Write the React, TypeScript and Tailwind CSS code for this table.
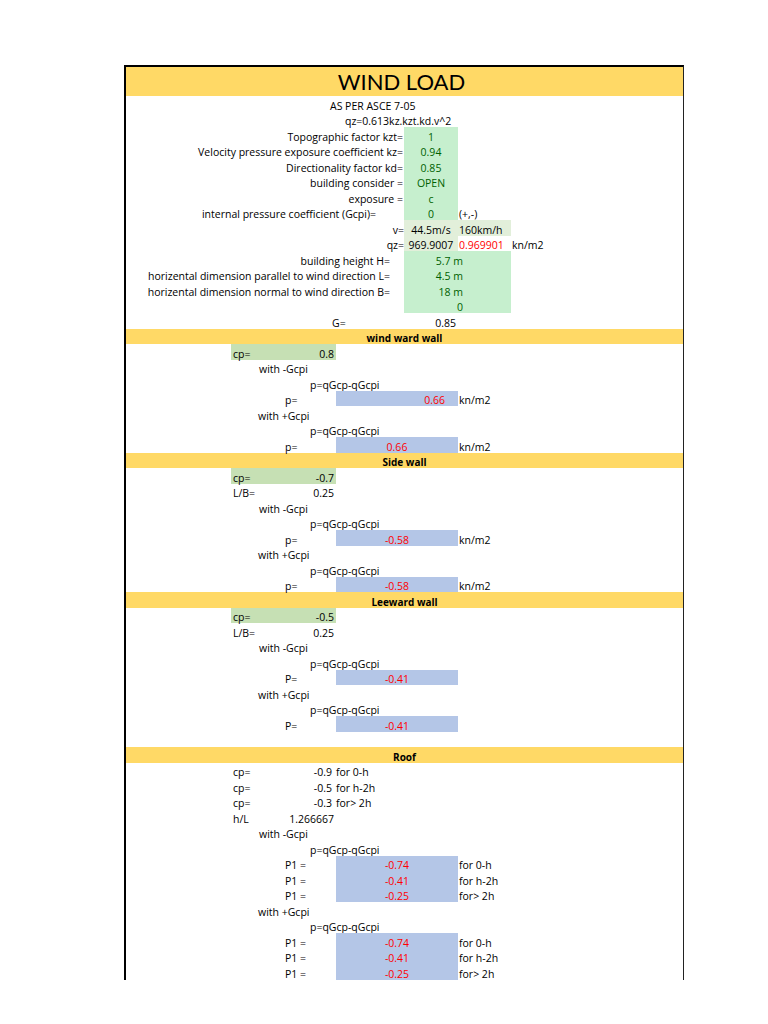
import type { ReactNode } from 'react'

// sheet columns: A 126-231, B 231-336, C 336-404, D 404-458, E 458-511, F 511-683
const cols = 'grid grid-cols-[105px_105px_68px_54px_53px_172px]'

const GOOD = 'bg-[#c6efce] text-[#006100]'
const LIGHT = 'bg-[#e2efda]'
const CP = 'bg-[#c6e0b4]'
const BLUE = 'bg-[#b4c6e7] text-[#ff0000]'

function Row({ children, className = '' }: { children?: ReactNode; className?: string }) {
  return <div className={`${cols} h-[15.5px] ${className}`}>{children}</div>
}

function Cell({ children, className = '' }: { children?: ReactNode; className?: string }) {
  return <div className={`flex items-end whitespace-nowrap leading-[11px] ${className}`}>{children}</div>
}

function Band({ title }: { title: string }) {
  return (
    <div className="flex h-[15.5px] items-end justify-center bg-[#ffd966] text-[10px] font-bold leading-[11px]">
      {title}
    </div>
  )
}

function WithRow({ sign }: { sign: string }) {
  return (
    <Row>
      <Cell className={sign === '-' ? 'col-start-2 pl-[28px]' : 'col-start-2 pl-[27px]'}>with {sign}Gcpi</Cell>
    </Row>
  )
}

function FormulaRow() {
  return (
    <Row>
      <Cell className="col-start-2 col-span-2 pl-[79px]">p=qGcp-qGcpi</Cell>
    </Row>
  )
}

function PRow({ label, value, note, right }: { label: string; value: string; note?: string; right?: boolean }) {
  return (
    <Row>
      <Cell className="col-start-2 pl-[54px]">{label}</Cell>
      <Cell className={`col-start-3 col-span-2 ${BLUE} ${right ? 'justify-end pr-[13px]' : 'justify-center'}`}>
        {value}
      </Cell>
      {note && <Cell className="col-start-5 pl-[1px]">{note}</Cell>}
    </Row>
  )
}

function PairRow({ label, value, bg = '' }: { label: string; value: string; bg?: string }) {
  return (
    <Row>
      <Cell className={`col-start-2 justify-between px-[2px] ${bg}`}>
        <span>{label}</span>
        <span>{value}</span>
      </Cell>
    </Row>
  )
}

function TopRow({ label, value, pr = 'pr-[1px]' }: { label: string; value: string; pr?: string }) {
  return (
    <Row>
      <Cell className={`col-span-3 justify-end ${pr}`}>{label}</Cell>
      <Cell className={`col-start-4 justify-center ${GOOD}`}>{value}</Cell>
    </Row>
  )
}

function DimRow({ label, value }: { label: string; value: string }) {
  return (
    <Row>
      <Cell className="col-span-3 justify-end pr-[14px]">{label}</Cell>
      <Cell className={`col-start-4 col-span-2 justify-end pr-[48px] ${GOOD}`}>{value}</Cell>
    </Row>
  )
}

function RoofCp({ value, note }: { value: string; note: string }) {
  return (
    <Row>
      <Cell className="col-start-2 justify-between pl-[2px] pr-[4px]">
        <span>cp=</span>
        <span>{value}</span>
      </Cell>
      <Cell className="col-start-3">{note}</Cell>
    </Row>
  )
}

export default function App() {
  return (
    <div className="min-h-[1024px] bg-white pt-[65px] font-[family-name:'Open_Sans',sans-serif] text-[10.5px] text-black">
      <div className="ml-[124px] w-[560px] border-t-2 border-l-2 border-r border-black border-r-[#222]">
        <div className="flex h-[29px] items-center justify-center bg-[#ffd966] pr-[6px] font-[family-name:Lato,sans-serif] text-[22px] leading-none">
          WIND LOAD
        </div>

        <Row>
          <Cell className="col-start-2 col-span-5 pl-[99px]">AS PER ASCE 7-05</Cell>
        </Row>
        <Row>
          <Cell className="col-start-3 col-span-4 pl-[9px]">qz=0.613kz.kzt.kd.v^2</Cell>
        </Row>
        <TopRow label="Topographic factor kzt=" value="1" />
        <TopRow label="Velocity pressure exposure coefficient kz=" value="0.94" />
        <TopRow label="Directionality factor kd=" value="0.85" />
        <TopRow label="building consider =" value="OPEN" />
        <TopRow label="exposure =" value="c" />
        <Row>
          <Cell className="col-span-3 justify-end pr-[28px]">internal pressure coefficient (Gcpi)=</Cell>
          <Cell className={`col-start-4 justify-center ${GOOD}`}>0</Cell>
          <Cell className="col-start-5 pl-[1px]">(+,-)</Cell>
        </Row>
        <Row>
          <Cell className="col-span-3 justify-end">v=</Cell>
          <Cell className={`col-start-4 justify-center ${LIGHT}`}>44.5m/s</Cell>
          <Cell className={`col-start-5 pl-[1px] ${LIGHT}`}>160km/h</Cell>
        </Row>
        <Row>
          <Cell className="col-span-3 justify-end">qz=</Cell>
          <Cell className={`col-start-4 justify-center ${LIGHT}`}>969.9007</Cell>
          <Cell className="col-start-5 pl-[1px] text-[#ff0000]">0.969901</Cell>
          <Cell className="col-start-6 pl-[1px]">kn/m2</Cell>
        </Row>
        <DimRow label="building height H=" value="5.7 m" />
        <DimRow label="horizental dimension parallel to wind direction L=" value="4.5 m" />
        <DimRow label="horizental dimension normal to wind direction B=" value="18 m" />
        <DimRow label="" value="0" />
        <Row>
          <Cell className="col-start-2 col-span-2 pl-[101px]">G=</Cell>
          <Cell className="col-start-4 justify-end pr-[2px]">0.85</Cell>
        </Row>

        <Band title="wind ward wall" />
        <PairRow label="cp=" value="0.8" bg={CP} />
        <WithRow sign="-" />
        <FormulaRow />
        <PRow label="p=" value="0.66" note="kn/m2" right />
        <WithRow sign="+" />
        <FormulaRow />
        <PRow label="p=" value="0.66" note="kn/m2" />

        <Band title="Side wall" />
        <PairRow label="cp=" value="-0.7" bg={CP} />
        <PairRow label="L/B=" value="0.25" />
        <WithRow sign="-" />
        <FormulaRow />
        <PRow label="p=" value="-0.58" note="kn/m2" />
        <WithRow sign="+" />
        <FormulaRow />
        <PRow label="p=" value="-0.58" note="kn/m2" />

        <Band title="Leeward wall" />
        <PairRow label="cp=" value="-0.5" bg={CP} />
        <PairRow label="L/B=" value="0.25" />
        <WithRow sign="-" />
        <FormulaRow />
        <PRow label="P=" value="-0.41" />
        <WithRow sign="+" />
        <FormulaRow />
        <PRow label="P=" value="-0.41" />
        <Row />

        <Band title="Roof" />
        <RoofCp value="-0.9" note="for 0-h" />
        <RoofCp value="-0.5" note="for h-2h" />
        <RoofCp value="-0.3" note="for> 2h" />
        <PairRow label="h/L" value="1.266667" />
        <WithRow sign="-" />
        <FormulaRow />
        <PRow label="P1 =" value="-0.74" note="for 0-h" />
        <PRow label="P1 =" value="-0.41" note="for h-2h" />
        <PRow label="P1 =" value="-0.25" note="for> 2h" />
        <WithRow sign="+" />
        <FormulaRow />
        <PRow label="P1 =" value="-0.74" note="for 0-h" />
        <PRow label="P1 =" value="-0.41" note="for h-2h" />
        <PRow label="P1 =" value="-0.25" note="for> 2h" />
      </div>
    </div>
  )
}
